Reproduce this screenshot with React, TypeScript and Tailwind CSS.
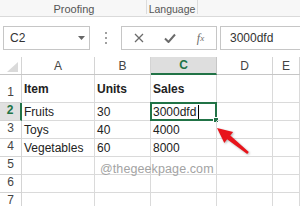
import React from 'react';

const cols = [
  { name: 'A', w: 'w-[73px]' },
  { name: 'B', w: 'w-[56px]' },
  { name: 'C', w: 'w-[66px]' },
  { name: 'D', w: 'w-[56px]' },
  { name: 'E', w: 'flex-1' },
];

const rows: { n: number; h: string; cells: string[]; bold?: boolean }[] = [
  { n: 1, h: 'h-[28px]', cells: ['Item', 'Units', 'Sales', '', ''], bold: true },
  { n: 2, h: 'h-[18px]', cells: ['Fruits', '30', '', '', ''] },
  { n: 3, h: 'h-[18px]', cells: ['Toys', '40', '4000', '', ''] },
  { n: 4, h: 'h-[18px]', cells: ['Vegetables', '60', '8000', '', ''] },
  { n: 5, h: 'h-[18px]', cells: ['', '', '', '', ''] },
  { n: 6, h: 'h-[18px]', cells: ['', '', '', '', ''] },
  { n: 7, h: 'h-[18px]', cells: ['', '', '', '', ''] },
];

const App: React.FC = () => {
  return (
    <div className="relative w-[300px] h-[206px] overflow-hidden bg-white font-['Liberation_Sans',Arial,sans-serif] text-[12px] text-[#222]">
      {/* Ribbon group labels */}
      <div className="flex h-[17px] bg-[#f7f7f7] border-b border-[#dadada] text-[11px] text-[#555]">
        <div className="w-[147px] flex items-center justify-center pl-[2px] border-r border-[#dcdcdc] h-[14px] pt-[5px]">
          Proofing
        </div>
        <div className="w-[51px] flex items-center justify-center border-r border-[#dcdcdc] h-[14px] pt-[5px] text-[10.5px]">
          Language
        </div>
      </div>

      {/* Formula bar */}
      <div className="flex items-start h-[40px] pt-[9px]">
        <div className="ml-[3px] w-[87px] h-[24px] border border-[#c6c6c6] flex items-center justify-between pl-[6px] pr-[4px] text-[12px] text-[#333]">
          <span>C2</span>
          <svg width="7" height="4" viewBox="0 0 7 4">
            <path d="M0 0h7L3.5 4z" fill="#666" />
          </svg>
        </div>
        <div className="w-[31px] h-[24px] flex flex-col items-center justify-center gap-[3px]">
          <span className="w-[2px] h-[2px] bg-[#a0a0a0]" />
          <span className="w-[2px] h-[2px] bg-[#a0a0a0]" />
          <span className="w-[2px] h-[2px] bg-[#a0a0a0]" />
        </div>
        <div className="w-[96px] h-[24px] border border-[#c6c6c6] flex items-center pl-[1px]">
          <div className="w-[31px] flex justify-center">
            <svg width="10" height="10" viewBox="0 0 10 10">
              <path d="M1 1l8 8M9 1l-8 8" stroke="#6b6b6b" strokeWidth="1.3" />
            </svg>
          </div>
          <div className="w-[31px] flex justify-center">
            <svg width="12" height="10" viewBox="0 0 12 10">
              <path d="M1 5.5l3.5 3.5L11 1.5" stroke="#6b6b6b" strokeWidth="2" fill="none" />
            </svg>
          </div>
          <div className="w-[31px] flex justify-center font-['Liberation_Serif',serif] italic text-[12px] text-[#6b6b6b]">
            f<span className="text-[9px] mt-[3px]">x</span>
          </div>
        </div>
        <div className="ml-[3px] flex-1 h-[24px] border border-r-0 border-[#c6c6c6] flex items-center pl-[9px] text-[12px] text-[#333]">
          3000dfd
        </div>
      </div>

      {/* Column headers */}
      <div className="flex h-[18px] border-b border-[#c6c6c6] text-[#444]">
        <div className="w-[22px] border-r border-[#d4d4d4] flex items-end justify-end pr-[3px] pb-[2px]">
          <svg width="11" height="10" viewBox="0 0 11 10">
            <path d="M11 0v10H0z" fill="#dadada" />
          </svg>
        </div>
        {cols.map((c) =>
          c.name === 'C' ? (
            <div
              key={c.name}
              className={`${c.w} bg-[#dedede] border-r border-[#c6c6c6] border-b-2 border-b-[#217346] -mb-px flex items-center justify-center font-bold text-[#217346]`}
            >
              {c.name}
            </div>
          ) : (
            <div key={c.name} className={`${c.w} border-r border-[#d4d4d4] flex items-center justify-center`}>
              {c.name}
            </div>
          )
        )}
      </div>

      {/* Rows */}
      {rows.map((r) => (
        <div key={r.n} className={`flex ${r.h}`}>
          {r.n === 2 ? (
            <div className="w-[22px] bg-[#e1e1e1] border-b border-[#d4d4d4] border-r-2 border-r-[#217346] flex items-end justify-center pb-[1px] font-bold text-[#217346]">
              {r.n}
            </div>
          ) : (
            <div className="w-[22px] border-b border-r border-[#d4d4d4] flex items-end justify-center pb-[1px] text-[#444]">
              {r.n}
            </div>
          )}
          {cols.map((c, i) => (
            <div
              key={c.name}
              className={`${c.w} relative border-b border-r border-[#dadada] flex items-center pl-[2px] ${r.bold ? 'font-bold' : ''}`}
            >
              {r.cells[i]}
              {r.n === 2 && c.name === 'C' && (
                <div className="absolute -left-px -top-px -right-[1px] -bottom-px border-2 border-[#217346] flex items-center pl-[1px] bg-white">
                  <span>3000dfd</span>
                  <span className="ml-[2px] w-px h-[14px] bg-black" />
                  <span className="absolute -right-[4px] -bottom-[4px] w-[6px] h-[6px] bg-[#217346] border border-white" />
                </div>
              )}
            </div>
          ))}
        </div>
      ))}

      {/* Watermark */}
      <div className="absolute left-[100px] top-[160px] text-[12.5px] text-[#a3a3a3] tracking-[0.1px]">
        @thegeekpage.com
      </div>

      {/* Red arrow */}
      <svg className="absolute left-[210px] top-[120px]" width="44" height="40" viewBox="0 0 44 40">
        <polygon
          points="7,8 23.1,11.9 20.3,15.5 38.8,32.1 37.2,33.9 17.1,19.3 14.3,22.9"
          fill="#e8141b"
          style={{ filter: 'drop-shadow(1px 1px 1px rgba(0,0,0,0.3))' }}
        />
      </svg>
    </div>
  );
};

export default App;
